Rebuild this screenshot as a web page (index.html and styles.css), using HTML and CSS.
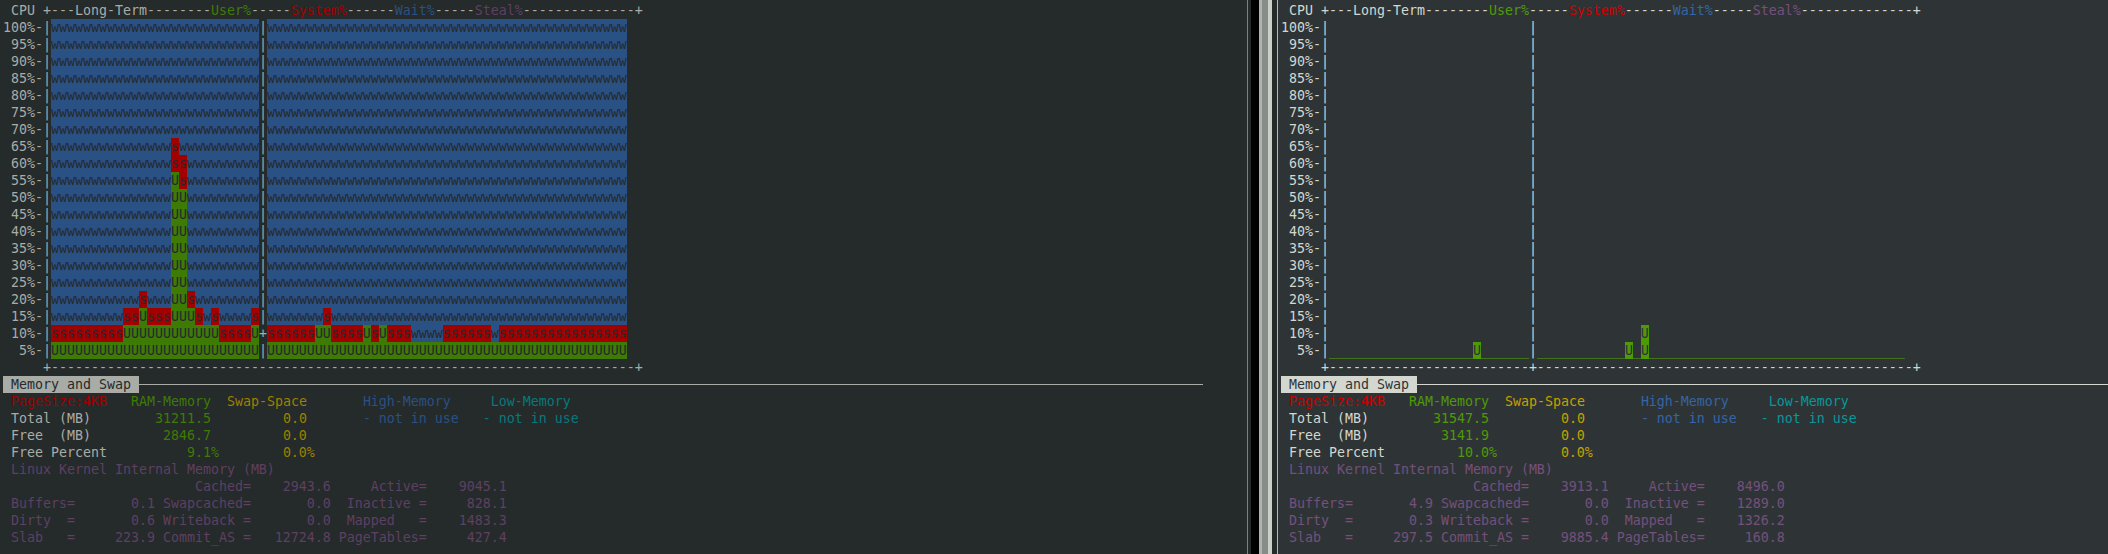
FILE: index.html
```html
<!DOCTYPE html>
<html lang="en">
<head>
<meta charset="utf-8">
<title>nmon</title>
<link rel="stylesheet" href="styles.css">
</head>
<body>
<main class="screen">
<section class="pane dim">
<div class="line"> CPU +---Long-Term--------<span class="green">User%</span>-----<span class="red">System%</span>------<span class="blue">Wait%</span>-----<span class="purple">Steal%</span>--------------+</div>
<div class="line">100%-|<span class="w">wwwwwwwwwwwwwwwwwwwwwwwwww</span>|<span class="w">wwwwwwwwwwwwwwwwwwwwwwwwwwwwwwwwwwwwwwwwwwwww</span></div>
<div class="line"> 95%-|<span class="w">wwwwwwwwwwwwwwwwwwwwwwwwww</span>|<span class="w">wwwwwwwwwwwwwwwwwwwwwwwwwwwwwwwwwwwwwwwwwwwww</span></div>
<div class="line"> 90%-|<span class="w">wwwwwwwwwwwwwwwwwwwwwwwwww</span>|<span class="w">wwwwwwwwwwwwwwwwwwwwwwwwwwwwwwwwwwwwwwwwwwwww</span></div>
<div class="line"> 85%-|<span class="w">wwwwwwwwwwwwwwwwwwwwwwwwww</span>|<span class="w">wwwwwwwwwwwwwwwwwwwwwwwwwwwwwwwwwwwwwwwwwwwww</span></div>
<div class="line"> 80%-|<span class="w">wwwwwwwwwwwwwwwwwwwwwwwwww</span>|<span class="w">wwwwwwwwwwwwwwwwwwwwwwwwwwwwwwwwwwwwwwwwwwwww</span></div>
<div class="line"> 75%-|<span class="w">wwwwwwwwwwwwwwwwwwwwwwwwww</span>|<span class="w">wwwwwwwwwwwwwwwwwwwwwwwwwwwwwwwwwwwwwwwwwwwww</span></div>
<div class="line"> 70%-|<span class="w">wwwwwwwwwwwwwwwwwwwwwwwwww</span>|<span class="w">wwwwwwwwwwwwwwwwwwwwwwwwwwwwwwwwwwwwwwwwwwwww</span></div>
<div class="line"> 65%-|<span class="w">wwwwwwwwwwwwwww</span><span class="s">s</span><span class="w">wwwwwwwwww</span>|<span class="w">wwwwwwwwwwwwwwwwwwwwwwwwwwwwwwwwwwwwwwwwwwwww</span></div>
<div class="line"> 60%-|<span class="w">wwwwwwwwwwwwwww</span><span class="s">ss</span><span class="w">wwwwwwwww</span>|<span class="w">wwwwwwwwwwwwwwwwwwwwwwwwwwwwwwwwwwwwwwwwwwwww</span></div>
<div class="line"> 55%-|<span class="w">wwwwwwwwwwwwwww</span><span class="u">U</span><span class="s">s</span><span class="w">wwwwwwwww</span>|<span class="w">wwwwwwwwwwwwwwwwwwwwwwwwwwwwwwwwwwwwwwwwwwwww</span></div>
<div class="line"> 50%-|<span class="w">wwwwwwwwwwwwwww</span><span class="u">UU</span><span class="w">wwwwwwwww</span>|<span class="w">wwwwwwwwwwwwwwwwwwwwwwwwwwwwwwwwwwwwwwwwwwwww</span></div>
<div class="line"> 45%-|<span class="w">wwwwwwwwwwwwwww</span><span class="u">UU</span><span class="w">wwwwwwwww</span>|<span class="w">wwwwwwwwwwwwwwwwwwwwwwwwwwwwwwwwwwwwwwwwwwwww</span></div>
<div class="line"> 40%-|<span class="w">wwwwwwwwwwwwwww</span><span class="u">UU</span><span class="w">wwwwwwwww</span>|<span class="w">wwwwwwwwwwwwwwwwwwwwwwwwwwwwwwwwwwwwwwwwwwwww</span></div>
<div class="line"> 35%-|<span class="w">wwwwwwwwwwwwwww</span><span class="u">UU</span><span class="w">wwwwwwwww</span>|<span class="w">wwwwwwwwwwwwwwwwwwwwwwwwwwwwwwwwwwwwwwwwwwwww</span></div>
<div class="line"> 30%-|<span class="w">wwwwwwwwwwwwwww</span><span class="u">UU</span><span class="w">wwwwwwwww</span>|<span class="w">wwwwwwwwwwwwwwwwwwwwwwwwwwwwwwwwwwwwwwwwwwwww</span></div>
<div class="line"> 25%-|<span class="w">wwwwwwwwwwwwwww</span><span class="u">UU</span><span class="w">wwwwwwwww</span>|<span class="w">wwwwwwwwwwwwwwwwwwwwwwwwwwwwwwwwwwwwwwwwwwwww</span></div>
<div class="line"> 20%-|<span class="w">wwwwwwwwwww</span><span class="s">s</span><span class="w">www</span><span class="u">UU</span><span class="s">s</span><span class="w">wwwwwwww</span>|<span class="w">wwwwwwwwwwwwwwwwwwwwwwwwwwwwwwwwwwwwwwwwwwwww</span></div>
<div class="line"> 15%-|<span class="w">wwwwwwwww</span><span class="s">ss</span><span class="u">U</span><span class="s">sss</span><span class="u">UUU</span><span class="s">s</span><span class="w">w</span><span class="s">s</span><span class="w">wwww</span><span class="s">s</span>|<span class="w">wwwwwww</span><span class="s">s</span><span class="w">wwwwwwwwwwwwwwwwwwwwwwwwwwwwwwwwwwwww</span></div>
<div class="line"> 10%-|<span class="s">sssssssss</span><span class="u">UUUUUUUUUUUU</span><span class="s">ssss</span><span class="u">U</span>+<span class="s">ssssss</span><span class="u">UU</span><span class="s">ssss</span><span class="u">U</span><span class="s">s</span><span class="u">U</span><span class="s">sss</span><span class="w">wwww</span><span class="s">ssssss</span><span class="w">w</span><span class="s">ssssssssssssssss</span></div>
<div class="line">  5%-|<span class="u">UUUUUUUUUUUUUUUUUUUUUUUUUU</span>|<span class="u">UUUUUUUUUUUUUUUUUUUUUUUUUUUUUUUUUUUUUUUUUUUUU</span></div>
<div class="line">     +-------------------------------------------------------------------------+</div>
<div class="tabrow"><div class="tab"> Memory and Swap </div><div class="rule"></div></div>
<div class="line"> <span class="red">PageSize:4KB</span>   <span class="green">RAM-Memory</span>  <span class="yellow">Swap-Space</span>       <span class="blue">High-Memory</span>     <span class="teal">Low-Memory</span></div>
<div class="line"> Total (MB)        <span class="green">31211.5</span>         <span class="yellow">0.0</span>       <span class="blue">- not in use</span>   <span class="teal">- not in use</span></div>
<div class="line"> Free  (MB)         <span class="green">2846.7</span>         <span class="yellow">0.0</span></div>
<div class="line"> Free Percent          <span class="green">9.1%</span>        <span class="yellow">0.0%</span></div>
<div class="line purple"> Linux Kernel Internal Memory (MB)</div>
<div class="line purple">                        Cached=    2943.6     Active=    9045.1</div>
<div class="line purple"> Buffers=       0.1 Swapcached=       0.0  Inactive =     828.1</div>
<div class="line purple"> Dirty  =       0.6 Writeback =       0.0  Mapped   =    1483.3</div>
<div class="line purple"> Slab   =     223.9 Commit_AS =   12724.8 PageTables=     427.4</div>
</section>
<div class="gutter">
<div class="stripe black"></div>
<div class="stripe pale"></div>
<div class="stripe mid"></div>
<div class="stripe light"></div>
</div>
<section class="pane bright">
<div class="line"> CPU +---Long-Term--------<span class="green">User%</span>-----<span class="red">System%</span>------<span class="blue">Wait%</span>-----<span class="purple">Steal%</span>--------------+</div>
<div class="line">100%-|                         |</div>
<div class="line"> 95%-|                         |</div>
<div class="line"> 90%-|                         |</div>
<div class="line"> 85%-|                         |</div>
<div class="line"> 80%-|                         |</div>
<div class="line"> 75%-|                         |</div>
<div class="line"> 70%-|                         |</div>
<div class="line"> 65%-|                         |</div>
<div class="line"> 60%-|                         |</div>
<div class="line"> 55%-|                         |</div>
<div class="line"> 50%-|                         |</div>
<div class="line"> 45%-|                         |</div>
<div class="line"> 40%-|                         |</div>
<div class="line"> 35%-|                         |</div>
<div class="line"> 30%-|                         |</div>
<div class="line"> 25%-|                         |</div>
<div class="line"> 20%-|                         |</div>
<div class="line"> 15%-|                         |</div>
<div class="line"> 10%-|                         |             <span class="u">U</span></div>
<div class="line">  5%-|<span class="green">__________________</span><span class="u">U</span><span class="green">______</span>|<span class="green">___________</span><span class="u">U</span><span class="green">_</span><span class="u">U</span><span class="green">________________________________</span></div>
<div class="line">     +-------------------------+-----------------------------------------------+</div>
<div class="tabrow"><div class="tab"> Memory and Swap </div><div class="rule"></div></div>
<div class="line"> <span class="red">PageSize:4KB</span>   <span class="green">RAM-Memory</span>  <span class="yellow">Swap-Space</span>       <span class="blue">High-Memory</span>     <span class="teal">Low-Memory</span></div>
<div class="line"> Total (MB)        <span class="green">31547.5</span>         <span class="yellow">0.0</span>       <span class="blue">- not in use</span>   <span class="teal">- not in use</span></div>
<div class="line"> Free  (MB)         <span class="green">3141.9</span>         <span class="yellow">0.0</span></div>
<div class="line"> Free Percent         <span class="green">10.0%</span>        <span class="yellow">0.0%</span></div>
<div class="line purple"> Linux Kernel Internal Memory (MB)</div>
<div class="line purple">                        Cached=    3913.1     Active=    8496.0</div>
<div class="line purple"> Buffers=       4.9 Swapcached=       0.0  Inactive =    1289.0</div>
<div class="line purple"> Dirty  =       0.3 Writeback =       0.0  Mapped   =    1326.2</div>
<div class="line purple"> Slab   =     297.5 Commit_AS =    9885.4 PageTables=     160.8</div>
</section>
</main>
</body>
</html>
```

FILE: styles.css
```css
* {
  box-sizing: border-box;
}

html,
body {
  margin: 0;
  padding: 0;
  background: #252a2b;
}

.screen {
  display: flex;
  height: 554px;
  overflow: hidden;
  font-family: "DejaVu Sans Mono", "Liberation Mono", monospace;
  font-size: 13.29px;
}

.pane {
  padding-top: 2px;
  padding-left: 3px;
  background: var(--bg);
  color: var(--fg);
}

.line {
  height: 17px;
  line-height: 17px;
  white-space: pre;
}

.dim {
  flex: 0 0 1248px;
  padding-right: 44px;
  border-right: 1px solid #7b8082;
  --bg: #252a2b;
  --fg: #a9aca6;
  --red: #a30000;
  --green: #3e7b05;
  --yellow: #9d8000;
  --blue: #2a5183;
  --teal: #057a7b;
  --purple: #5e4062;
}

.bright {
  flex: 1;
  min-width: 0;
  border-left: 1px solid #b4b8b6;
  --bg: #2e3436;
  --fg: #d3d7cf;
  --red: #cc0000;
  --green: #4e9a06;
  --yellow: #c4a000;
  --blue: #3465a4;
  --teal: #06989a;
  --purple: #75507b;
}

.red { color: var(--red); }
.green { color: var(--green); }
.yellow { color: var(--yellow); }
.blue { color: var(--blue); }
.teal { color: var(--teal); }
.purple { color: var(--purple); }

.u,
.s,
.w {
  display: inline-block;
  height: 17px;
  vertical-align: top;
  color: var(--bg);
}

.u { background: var(--green); }
.s { background: var(--red); }
.w { background: var(--blue); }

.tabrow {
  display: flex;
  align-items: center;
  height: 17px;
}

.tab {
  height: 17px;
  line-height: 17px;
  white-space: pre;
  background: var(--fg);
  color: var(--bg);
}

.rule {
  flex: 1;
  height: 1px;
  background: var(--fg);
}

.gutter {
  flex: 0 0 29px;
  display: flex;
  padding-left: 3px;
  background: #252a2b;
}

.stripe {
  height: 100%;
}

.black {
  flex: 0 0 8px;
  background: #000;
}

.pale {
  flex: 0 0 3px;
  background: #b2b3ae;
}

.mid {
  flex: 0 0 6px;
  background: #888c88;
}

.light {
  flex: 0 0 4px;
  background: #cdcfc9;
}
```
